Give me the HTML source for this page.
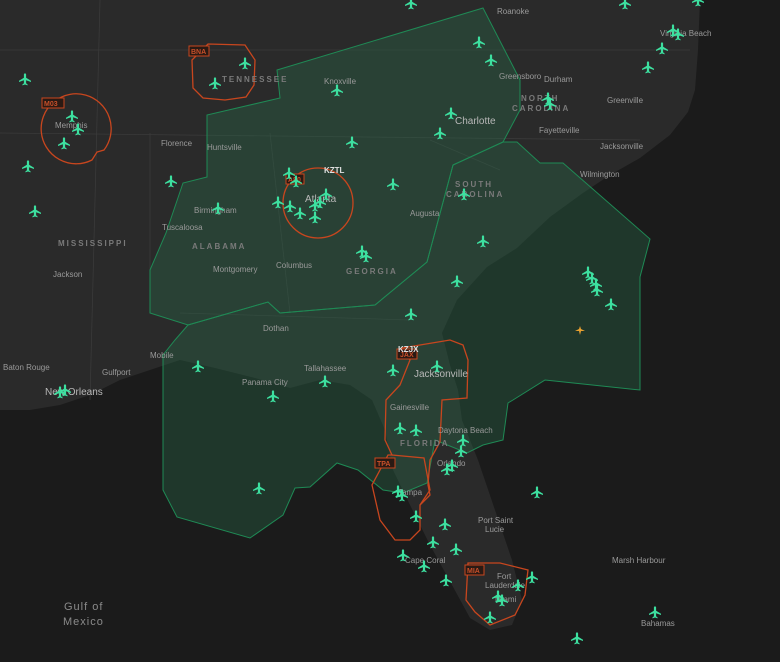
<!DOCTYPE html>
<html><head><meta charset="utf-8"><style>
html,body{margin:0;padding:0;background:#1b1b1b;}
svg{display:block}
.c{font-family:"Liberation Sans",sans-serif;font-size:8px;fill:#9a9a9a}
.cb{font-family:"Liberation Sans",sans-serif;font-size:10px;fill:#b8b8b8}
.s{font-family:"Liberation Sans",sans-serif;font-size:8px;font-weight:bold;fill:#7a7a7a;letter-spacing:2px}
.o{font-family:"Liberation Sans",sans-serif;font-size:7px;font-weight:bold;fill:#c8502a}
.k{font-family:"Liberation Sans",sans-serif;font-size:8px;font-weight:bold;fill:#e0e0e0}
.g{font-family:"Liberation Sans",sans-serif;font-size:11px;fill:#8a8a8a;letter-spacing:1px}
</style></head><body>
<svg width="780" height="662" viewBox="0 0 780 662" xmlns="http://www.w3.org/2000/svg">
<defs>
<path id="p" d="M0,-6 L1.1,-4.8 L1.1,-1.2 L6,1.8 L6,3 L1.1,1.2 L1.1,4.2 L2.6,5.5 L2.6,6.4 L0,5.5 L-2.6,6.4 L-2.6,5.5 L-1.1,4.2 L-1.1,1.2 L-6,3 L-6,1.8 L-1.1,-1.2 L-1.1,-4.8 Z" fill="#3de0a0"/>
</defs>
<rect width="780" height="662" fill="#1b1b1b"/>
<path d="M0,0 L700,0 L698,50 L695,90 L688,112 L670,135 L640,158 L610,175 L583,193 L550,217 L517,248 L487,267 L457,300 L442,333 L450,365 L458,390 L462,420 L478,460 L495,510 L512,560 L522,600 L512,625 L490,630 L470,618 L452,585 L430,545 L410,505 L393,470 L385,430 L372,400 L350,385 L320,380 L290,388 L255,378 L215,368 L180,360 L150,370 L120,380 L90,395 L60,405 L30,410 L0,410 Z" fill="#2a2a2a"/>
<g stroke="#3a3a3a" stroke-width="0.8" fill="none">
<path d="M0,50 L690,50"/><path d="M0,133 L640,140"/><path d="M150,133 L150,313"/><path d="M270,133 L290,313"/><path d="M100,0 L90,400"/><path d="M180,313 L410,320"/><path d="M430,140 L500,170"/>
</g>
<path d="M503,142 L517,142 L540,163 L563,163 L650,239 L640,277 L640,390 L545,380 L513,400 L508,403 L503,440 L483,445 L467,453 L435,440 L427,483 L403,493 L383,490 L358,470 L337,463 L310,487 L295,488 L283,515 L250,538 L177,517 L163,490 L163,355 L175,340 L188,325 L268,302 L280,313 L375,305 L427,262 L453,165 Z" fill="rgba(40,110,75,0.35)" stroke="#1f8a55" stroke-width="1"/>
<path d="M483,8 L520,80 L520,110 L503,142 L453,165 L427,262 L375,305 L280,313 L268,302 L188,325 L150,313 L150,270 L166,233 L183,183 L207,177 L207,115 L280,98 L277,70 Z" fill="rgba(40,110,75,0.35)" stroke="#1f8a55" stroke-width="1"/>
<g stroke="#c8461e" stroke-width="1.3" fill="none">
<path d="M208,44 L245,45 L255,60 L254,85 L246,97 L225,100 L203,98 L193,88 L192,60 Z"/>
<path d="M92,160 A35,35 0 1 1 104,150 L97,152 Z"/>
<circle cx="318" cy="203" r="35"/>
<path d="M402,348 L450,340 L463,345 L468,360 L467,398 L442,400 L440,442 L430,460 L428,485 L430,495 L420,505 L420,530 L410,540 L395,540 L380,520 L372,485 L388,455 L392,455 L385,440 L386,400 L400,385 L410,360 Z"/>
<path d="M392,455 L424,458 L430,490 L420,505"/>
<path d="M468,563 L500,563 L528,570 L525,595 L515,615 L490,625 L475,612 L466,600 Z"/>
</g>
<g fill="#2a1a14" stroke="#c8461e" stroke-width="1">
<rect x="189" y="46" width="20" height="10"/><rect x="42" y="98" width="22" height="10"/><rect x="286" y="174" width="18" height="10"/><rect x="397" y="349" width="20" height="10"/><rect x="375" y="458" width="20" height="10"/><rect x="465" y="565" width="19" height="10"/>
</g>
<text class="o" x="191" y="54">BNA</text><text class="o" x="44" y="106">M03</text><text class="o" x="288" y="182">A80</text><text class="o" x="400" y="357">JAX</text><text class="o" x="377" y="466">TPA</text><text class="o" x="467" y="573">MIA</text>
<text class="k" x="324" y="173">KZTL</text><text class="k" x="398" y="352">KZJX</text>
<text class="c" x="497" y="14">Roanoke</text><text class="c" x="660" y="36">Virginia Beach</text><text class="c" x="499" y="79">Greensboro</text><text class="c" x="544" y="82">Durham</text><text class="c" x="324" y="84">Knoxville</text><text class="c" x="607" y="103">Greenville</text><text class="cb" x="455" y="124">Charlotte</text><text class="c" x="539" y="133">Fayetteville</text><text class="c" x="600" y="149">Jacksonville</text><text class="c" x="161" y="146">Florence</text><text class="c" x="207" y="150">Huntsville</text><text class="c" x="580" y="177">Wilmington</text><text class="c" x="55" y="128">Memphis</text><text class="c" x="194" y="213">Birmingham</text><text class="cb" x="305" y="202">Atlanta</text><text class="c" x="410" y="216">Augusta</text><text class="c" x="162" y="230">Tuscaloosa</text><text class="c" x="53" y="277">Jackson</text><text class="c" x="213" y="272">Montgomery</text><text class="c" x="276" y="268">Columbus</text><text class="c" x="263" y="331">Dothan</text><text class="c" x="150" y="358">Mobile</text><text class="c" x="3" y="370">Baton Rouge</text><text class="c" x="102" y="375">Gulfport</text><text class="c" x="304" y="371">Tallahassee</text><text class="c" x="242" y="385">Panama City</text><text class="cb" x="414" y="377">Jacksonville</text><text class="cb" x="45" y="395">New Orleans</text><text class="c" x="390" y="410">Gainesville</text><text class="c" x="438" y="433">Daytona Beach</text><text class="c" x="437" y="466">Orlando</text><text class="c" x="398" y="495">Tampa</text><text class="c" x="478" y="523">Port Saint</text><text class="c" x="485" y="532">Lucie</text><text class="c" x="405" y="563">Cape Coral</text><text class="c" x="612" y="563">Marsh Harbour</text><text class="c" x="497" y="579">Fort</text><text class="c" x="485" y="588">Lauderdale</text><text class="c" x="495" y="602">Miami</text><text class="c" x="641" y="626">Bahamas</text>
<text class="s" x="521" y="101">NORTH</text><text class="s" x="512" y="111">CAROLINA</text><text class="s" x="222" y="82">TENNESSEE</text><text class="s" x="455" y="187">SOUTH</text><text class="s" x="446" y="197">CAROLINA</text><text class="s" x="192" y="249">ALABAMA</text><text class="s" x="346" y="274">GEORGIA</text><text class="s" x="58" y="246">MISSISSIPPI</text><text class="s" x="400" y="446">FLORIDA</text>
<text class="g" x="64" y="610">Gulf of</text><text class="g" x="63" y="625">Mexico</text>
<g>
<use href="#p" x="25" y="79"/><use href="#p" x="72" y="116"/><use href="#p" x="78" y="129"/><use href="#p" x="64" y="143"/><use href="#p" x="28" y="166"/><use href="#p" x="35" y="211"/><use href="#p" x="65" y="390"/><use href="#p" x="60" y="392"/>
<use href="#p" x="245" y="63"/><use href="#p" x="215" y="83"/><use href="#p" x="171" y="181"/><use href="#p" x="218" y="208"/><use href="#p" x="289" y="173"/><use href="#p" x="296" y="181"/><use href="#p" x="278" y="202"/><use href="#p" x="290" y="206"/><use href="#p" x="300" y="213"/><use href="#p" x="315" y="217"/><use href="#p" x="315" y="205"/><use href="#p" x="320" y="202"/><use href="#p" x="326" y="194"/><use href="#p" x="362" y="251"/><use href="#p" x="366" y="256"/>
<use href="#p" x="337" y="90"/><use href="#p" x="352" y="142"/><use href="#p" x="393" y="184"/><use href="#p" x="440" y="133"/><use href="#p" x="451" y="113"/><use href="#p" x="479" y="42"/><use href="#p" x="491" y="60"/><use href="#p" x="411" y="3"/><use href="#p" x="464" y="194"/><use href="#p" x="483" y="241"/><use href="#p" x="457" y="281"/><use href="#p" x="411" y="314"/><use href="#p" x="550" y="104"/><use href="#p" x="548" y="98"/><use href="#p" x="648" y="67"/><use href="#p" x="662" y="48"/><use href="#p" x="673" y="30"/><use href="#p" x="678" y="34"/><use href="#p" x="698" y="0"/><use href="#p" x="625" y="3"/>
<use href="#p" x="588" y="272"/><use href="#p" x="592" y="278"/><use href="#p" x="596" y="284"/><use href="#p" x="597" y="290"/><use href="#p" x="611" y="304"/>
<use href="#p" x="198" y="366"/><use href="#p" x="273" y="396"/><use href="#p" x="325" y="381"/><use href="#p" x="393" y="370"/><use href="#p" x="437" y="366"/><use href="#p" x="400" y="428"/><use href="#p" x="416" y="430"/><use href="#p" x="463" y="440"/><use href="#p" x="461" y="451"/><use href="#p" x="452" y="465"/><use href="#p" x="447" y="469"/><use href="#p" x="259" y="488"/><use href="#p" x="398" y="491"/><use href="#p" x="402" y="495"/><use href="#p" x="416" y="516"/><use href="#p" x="445" y="524"/><use href="#p" x="537" y="492"/><use href="#p" x="433" y="542"/><use href="#p" x="456" y="549"/><use href="#p" x="403" y="555"/><use href="#p" x="424" y="566"/><use href="#p" x="446" y="580"/><use href="#p" x="532" y="577"/><use href="#p" x="518" y="585"/><use href="#p" x="498" y="596"/><use href="#p" x="502" y="600"/><use href="#p" x="490" y="617"/><use href="#p" x="655" y="612"/><use href="#p" x="577" y="638"/>
</g>
<path d="M580,326 L581,329 L585,331 L581,331 L580,335 L579,331 L575,331 L579,329 Z" fill="#e8a030"/>
</svg>
</body></html>
